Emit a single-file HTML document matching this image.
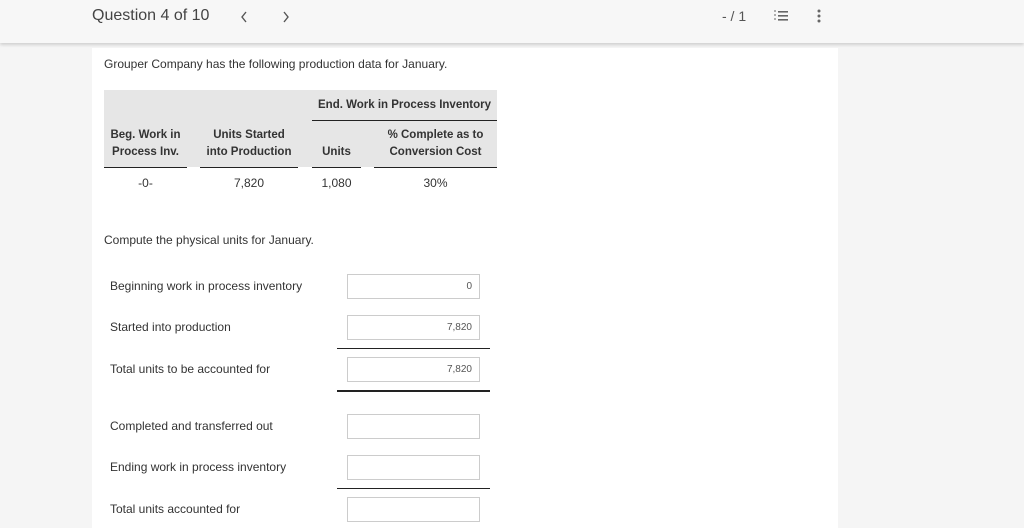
<!DOCTYPE html>
<html><head><style>
body{margin:0;width:1024px;height:517px;overflow:hidden;background:#f5f5f5;font-family:"Liberation Sans",sans-serif;color:#333;position:relative}
.hdr{position:absolute;left:0;top:0;width:1024px;height:43px;background:#f7f7f7;box-shadow:0 2px 3px rgba(0,0,0,.15)}
.a{position:absolute;white-space:nowrap}
.panel{position:absolute;left:92px;top:48px;width:746px;height:480px;background:#fff}
.th{position:absolute;left:104px;top:90px;width:393px;height:77px;background:#e6e6e6}
.l{position:absolute;height:1px;background:#222}
.c{text-align:center;font-size:11.5px;font-weight:bold;line-height:17px;color:#333}
.in{position:absolute;left:347px;width:133px;height:25px;border:1px solid #ccc;background:#fff;font-size:10px;text-align:right;box-sizing:border-box;padding-right:7px;line-height:24px;color:#555}
.lab{font-size:12px;color:#333}
</style></head><body>
<div class="hdr"></div>
<div class="a" style="left:92px;top:7px;font-size:16px;color:#444">Question 4 of 10</div>
<svg class="a" style="left:240px;top:11px" width="8" height="12"><path d="M6 1L2 6L6 11" stroke="#555" stroke-width="1.4" fill="none"/></svg>
<svg class="a" style="left:282px;top:11px" width="8" height="12"><path d="M2 1L6 6L2 11" stroke="#555" stroke-width="1.4" fill="none"/></svg>
<div class="a" style="left:722px;top:8px;font-size:14px;color:#555">- / 1</div>
<svg class="a" style="left:773px;top:9px" width="16" height="14"><g fill="#666"><rect x="5" y="2" width="10" height="1.6"/><rect x="5" y="6" width="10" height="1.6"/><rect x="5" y="10" width="10" height="1.6"/><rect x="1" y="1.5" width="2" height="1"/><rect x="1" y="5.5" width="2" height="1"/><rect x="1" y="9.5" width="2" height="1"/></g></svg>
<svg class="a" style="left:816px;top:9px" width="6" height="14"><g fill="#666"><circle cx="3" cy="2" r="1.5"/><circle cx="3" cy="7" r="1.5"/><circle cx="3" cy="12" r="1.5"/></g></svg>
<div class="panel"></div>
<div class="a" style="left:104px;top:57px;font-size:12px">Grouper Company has the following production data for January.</div>
<div class="th"></div>
<div class="a c" style="left:312px;top:97px;width:185px">End. Work in Process Inventory</div>
<div class="l" style="left:312px;top:120px;width:185px"></div>
<div class="a c" style="left:104px;top:127px;width:83px">Beg. Work in<br>Process Inv.</div>
<div class="a c" style="left:200px;top:127px;width:98px">Units Started<br>into Production</div>
<div class="a c" style="left:312px;top:144px;width:49px">Units</div>
<div class="a c" style="left:374px;top:127px;width:123px">% Complete as to<br>Conversion Cost</div>
<div class="l" style="left:104px;top:167px;width:83px"></div>
<div class="l" style="left:200px;top:167px;width:98px"></div>
<div class="l" style="left:312px;top:167px;width:49px"></div>
<div class="l" style="left:374px;top:167px;width:123px"></div>
<div class="a" style="left:104px;top:176px;width:83px;text-align:center;font-size:12px">-0-</div>
<div class="a" style="left:200px;top:176px;width:98px;text-align:center;font-size:12px">7,820</div>
<div class="a" style="left:312px;top:176px;width:49px;text-align:center;font-size:12px">1,080</div>
<div class="a" style="left:374px;top:176px;width:123px;text-align:center;font-size:12px">30%</div>
<div class="a" style="left:104px;top:233px;font-size:12px">Compute the physical units for January.</div>
<div class="a lab" style="left:110px;top:279px">Beginning work in process inventory</div>
<div class="a lab" style="left:110px;top:320px">Started into production</div>
<div class="a lab" style="left:110px;top:362px">Total units to be accounted for</div>
<div class="a lab" style="left:110px;top:419px">Completed and transferred out</div>
<div class="a lab" style="left:110px;top:460px">Ending work in process inventory</div>
<div class="a lab" style="left:110px;top:502px">Total units accounted for</div>
<div class="in" style="top:274px">0</div>
<div class="in" style="top:315px">7,820</div>
<div class="l" style="left:337px;top:348px;width:153px"></div>
<div class="in" style="top:357px">7,820</div>
<div class="l" style="left:337px;top:390px;width:153px;height:2px"></div>
<div class="in" style="top:414px"></div>
<div class="in" style="top:455px"></div>
<div class="l" style="left:337px;top:488px;width:153px"></div>
<div class="in" style="top:497px"></div>
</body></html>
